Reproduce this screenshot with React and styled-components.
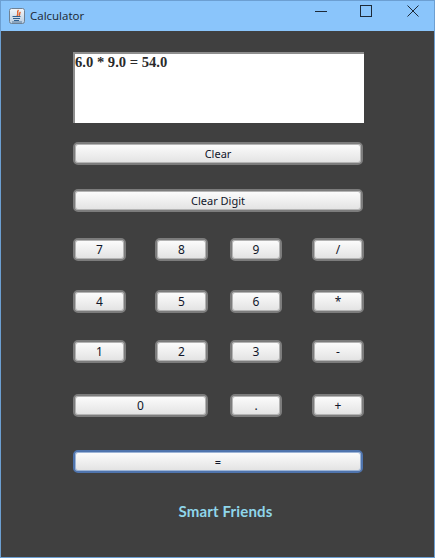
import React from 'react';
import styled, { createGlobalStyle } from 'styled-components';

const GlobalStyle = createGlobalStyle`
	html, body {
		margin: 0;
		padding: 0;
		background: #404040;
	}
`;

const ROWS = [
	{ top: 26, keys: [['7', 1, 1], ['8', 3, 1], ['9', 5, 1], ['/', 7, 1]] },
	{ top: 29, keys: [['4', 1, 1], ['5', 3, 1], ['6', 5, 1], ['*', 7, 1]] },
	{ top: 27, keys: [['1', 1, 1], ['2', 3, 1], ['3', 5, 1], ['-', 7, 1]] },
	{ top: 31, keys: [['0', 1, 3], ['.', 5, 1], ['+', 7, 1]] },
];

const App = () => (
	<Window>
		<GlobalStyle />
		<TitleBar>
			<JavaIcon />
			<Title>Calculator</Title>
			<Controls>
				<Control $width={45} aria-label="Minimize">
					<svg width="12" height="12" viewBox="0 0 12 12">
						<path d="M0 6.5H12" stroke="#1d2a38" strokeWidth="1" />
					</svg>
				</Control>
				<Control $width={46} aria-label="Maximize">
					<svg width="12" height="12" viewBox="0 0 12 12">
						<rect x="0.5" y="0.5" width="11" height="11" fill="none" stroke="#1d2a38" />
					</svg>
				</Control>
				<Control $width={48} aria-label="Close">
					<svg width="12" height="12" viewBox="0 0 12 12">
						<path d="M0.5 0.5L11.5 11.5M11.5 0.5L0.5 11.5" stroke="#1d2a38" strokeWidth="1" />
					</svg>
				</Control>
			</Controls>
		</TitleBar>
		<Content>
			<Display>6.0 * 9.0 = 54.0</Display>
			<WideKey $top={19}>Clear</WideKey>
			<WideKey $top={24}>Clear Digit</WideKey>
			{ROWS.map(row => (
				<KeyRow key={row.keys[0][0]} $top={row.top}>
					{row.keys.map(([label, col, span]) => (
						<Key key={label} $col={col} $span={span}>
							{label}
						</Key>
					))}
				</KeyRow>
			))}
			<WideKey $top={33} $focused>
				=
			</WideKey>
			<Brand>Smart Friends</Brand>
		</Content>
	</Window>
);

// иконка java в заголовке окна
const JavaIcon = () => (
	<IconHolder width="16" height="16" viewBox="0 0 16 16">
		<defs>
			<linearGradient id="javaBack" x1="0" y1="0" x2="0" y2="1">
				<stop offset="0" stopColor="#f4f7fa" />
				<stop offset="1" stopColor="#b9cde0" />
			</linearGradient>
		</defs>
		<rect x="0.5" y="0.5" width="15" height="15" rx="2" fill="url(#javaBack)" stroke="#6f8193" />
		<path d="M9.5 2C7 4.5 10.5 5 8 8M11.5 4C9.8 5.5 11.5 6 10 8" fill="none" stroke="#e2622b" strokeWidth="1.4" />
		<path d="M3.5 8.5H11.5M4 10.5H11M5 12.5H10" stroke="#2f5f8f" strokeWidth="1" />
		<path d="M3 14H13" stroke="#55799c" strokeWidth="1" />
	</IconHolder>
);

const Window = styled.div`
	box-sizing: border-box;
	width: 435px;
	height: 558px;
	display: flex;
	flex-direction: column;
	border: 1px solid #6c9fd2;
	background: #404040;
	overflow: hidden;
`;

const TitleBar = styled.div`
	height: 30px;
	flex: none;
	display: flex;
	align-items: center;
	padding-left: 8px;
	background: #8ac5fb;
`;

const IconHolder = styled.svg`
	flex: none;
	margin-right: 5px;
`;

const Title = styled.span`
	margin-bottom: 1px;
	font: 11.5px 'Open Sans', sans-serif;
	color: #1b2530;
`;

const Controls = styled.div`
	display: flex;
	align-self: flex-start;
	margin-left: auto;
	margin-top: -1px;
	margin-right: -3px;
`;

const Control = styled.div`
	width: ${props => props.$width}px;
	height: 22px;
	display: flex;
	align-items: center;
	justify-content: center;
`;

const Content = styled.div`
	flex: 1;
	display: flex;
	flex-direction: column;
	padding: 21px 70px 0 72px;
`;

const Display = styled.div`
	box-sizing: border-box;
	height: 71px;
	border-top: 2px solid #8e8e8e;
	border-left: 2px solid #8e8e8e;
	background: #fff;
	font: bold 14.6px/16px 'Liberation Serif', serif;
	color: #2a2a2a;
`;

const Key = styled.button`
	box-sizing: border-box;
	grid-column: ${props => props.$col} / span ${props => props.$span || 1};
	height: 23px;
	padding: 0 0 1px;
	border: 2px solid ${props => (props.$focused ? '#4f74ad' : '#7c7c7c')};
	border-radius: 5px;
	background: linear-gradient(#fdfdfd, #e2e2e2);
	box-shadow: inset 0 0 0 1px ${props => (props.$focused ? '#9db4d6' : '#b4b4b4')};
	font: 12px 'Noto Sans', sans-serif;
	color: #10162a;
	outline: none;
`;

const WideKey = styled(Key)`
	width: 290px;
	margin-top: ${props => props.$top}px;
	font-size: 11px;
`;

const KeyRow = styled.div`
	display: grid;
	grid-template-columns: 53px 29px 53px 22px 52px 30px 52px;
	margin-top: ${props => props.$top}px;
`;

const Brand = styled.div`
	margin-top: 29px;
	padding-left: 14px;
	text-align: center;
	font: bold 15px/18px 'Lato', sans-serif;
	letter-spacing: 0.15px;
	color: #8fd6ea;
`;

export default App;
